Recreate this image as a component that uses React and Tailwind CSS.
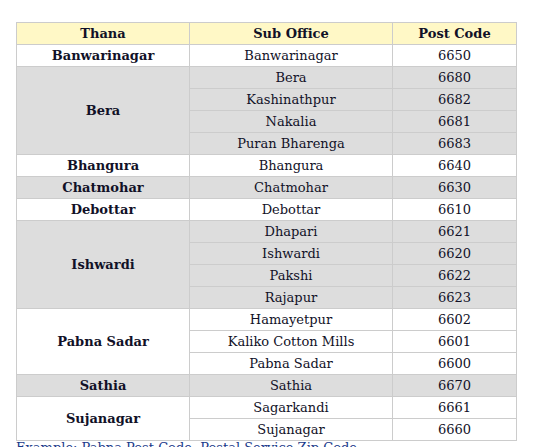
const groups = [
  ["Banwarinagar", [["Banwarinagar", "6650"]]],
  ["Bera", [["Bera", "6680"], ["Kashinathpur", "6682"], ["Nakalia", "6681"], ["Puran Bharenga", "6683"]]],
  ["Bhangura", [["Bhangura", "6640"]]],
  ["Chatmohar", [["Chatmohar", "6630"]]],
  ["Debottar", [["Debottar", "6610"]]],
  ["Ishwardi", [["Dhapari", "6621"], ["Ishwardi", "6620"], ["Pakshi", "6622"], ["Rajapur", "6623"]]],
  ["Pabna Sadar", [["Hamayetpur", "6602"], ["Kaliko Cotton Mills", "6601"], ["Pabna Sadar", "6600"]]],
  ["Sathia", [["Sathia", "6670"]]],
  ["Sujanagar", [["Sagarkandi", "6661"], ["Sujanagar", "6660"]]],
];

export default function App() {
  return (
    <div className="w-[543px] h-[447px] overflow-hidden bg-white text-[#111127] text-[13px]" style={{ fontFamily: '"DejaVu Serif", Georgia, serif' }}>
      <div className="pt-[22px] pl-[16px]">
        <table className="border-collapse w-[500px] table-fixed">
          <colgroup>
            <col className="w-[173px]" />
            <col className="w-[203px]" />
            <col className="w-[124px]" />
          </colgroup>
          <thead>
            <tr className="bg-[#fff8c6]">
              <th className="border border-[#cccccc] h-[22px] p-0 font-bold">Thana</th>
              <th className="border border-[#cccccc] h-[22px] p-0 font-bold">Sub Office</th>
              <th className="border border-[#cccccc] h-[22px] p-0 font-bold">Post Code</th>
            </tr>
          </thead>
          <tbody>
            {groups.map(([thana, rows], gi) => {
              const bg = gi % 2 === 1 ? "bg-[#dddddd]" : "bg-white";
              return rows.map(([office, code], ri) => (
                <tr key={thana + office} className={bg}>
                  {ri === 0 && (
                    <td rowSpan={rows.length} className="border border-[#cccccc] p-0 text-center font-bold">
                      {thana}
                    </td>
                  )}
                  <td className="border border-[#cccccc] h-[22px] p-0 text-center">{office}</td>
                  <td className="border border-[#cccccc] h-[22px] p-0 text-center">{code}</td>
                </tr>
              ));
            })}
          </tbody>
        </table>
        <p className="-mt-[1px] leading-[16px] text-[#1a3a8a] whitespace-nowrap">Example: Pabna Post Code, Postal Service Zip Code</p>
      </div>
    </div>
  );
}
